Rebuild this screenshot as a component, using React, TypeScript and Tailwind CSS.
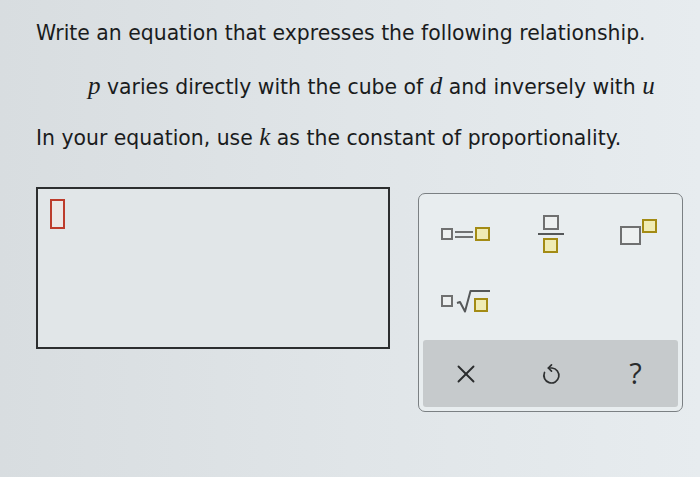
import { X } from 'lucide-react';

const GrayBox = ({ w = 12, h = 12 }: { w?: number; h?: number }) => (
  <span
    className="inline-block border-2 border-[#6f7070] bg-[#edf0f0]"
    style={{ width: w, height: h }}
  />
);

const GoldBox = ({ w = 15, h = 14 }: { w?: number; h?: number }) => (
  <span
    className="inline-block border-2 border-[#a38b14] bg-[#f0ecb4]"
    style={{ width: w, height: h }}
  />
);

function Var({ children }: { children: string }) {
  return (
    <span className="font-['Liberation_Serif',serif] text-[25px] italic leading-none">{children}</span>
  );
}

function UndoIcon() {
  return (
    <svg width="24" height="24" viewBox="0 0 24 24" fill="none" stroke="#2e3031" strokeWidth="1.7" strokeLinecap="round" strokeLinejoin="round">
      <path d="M5.5 10.5 A 7.5 7.5 0 1 0 13 6 L9.5 6" />
      <path d="M12.5 2.8 L9.3 6 L12.5 9.2" />
    </svg>
  );
}

export default function App() {
  return (
    <div className="h-[477px] w-[700px] overflow-hidden bg-gradient-to-r from-[#d8dde0] via-[#e0e5e8] to-[#e7ecef] font-['DejaVu_Sans',sans-serif] text-[#1a1c1d]">
      <div className="pl-[36px] pt-[20px] text-[20.4px] leading-[27px]">
        <p>Write an equation that expresses the following relationship.</p>
        <p className="mt-[26px] pl-[52px]">
          <Var>p</Var> varies directly with the cube of <Var>d</Var> and inversely with <Var>u</Var>
        </p>
        <p className="mt-[23px]">
          In your equation, use <Var>k</Var> as the constant of proportionality.
        </p>
      </div>

      <div className="mt-[35px] flex items-start pl-[36px]">
        <div className="h-[162px] w-[354px] border-2 border-[#2c2e2f] bg-[#e1e6e8] pl-[12px] pt-[10px]">
          <span className="block h-[30px] w-[15px] border-2 border-[#bd3b2b] bg-[#ece6e5]" />
        </div>

        <div className="ml-[28px] mt-[6px] flex h-[219px] w-[265px] flex-col rounded-[7px] border-[1.5px] border-[#7b8083] bg-[#e8edef] p-[4px]">
          <div className="grid grid-cols-3 gap-y-[27px] pt-[16px]">
            <div className="flex h-[40px] items-center justify-center gap-[2px]">
              <GrayBox />
              <span className="flex flex-col gap-[3px]">
                <span className="block h-[2px] w-[18px] bg-[#707272]" />
                <span className="block h-[2px] w-[18px] bg-[#707272]" />
              </span>
              <GoldBox />
            </div>
            <div className="flex h-[40px] flex-col items-center justify-center">
              <GrayBox w={16} h={15} />
              <span className="my-[3px] block h-[2px] w-[26px] bg-[#555859]" />
              <GoldBox w={15} h={15} />
            </div>
            <div className="flex h-[40px] items-center justify-center">
              <span className="ml-[6px] flex items-start">
                <span className="mt-[10px]">
                  <GrayBox w={21} h={19} />
                </span>
                <span className="ml-[1px]">
                  <GoldBox w={15} h={14} />
                </span>
              </span>
            </div>
            <div className="flex h-[40px] items-center justify-center gap-[3px]">
              <GrayBox />
              <span className="flex items-start">
                <svg width="16" height="23" viewBox="0 0 16 23" fill="none" stroke="#555859" strokeWidth="2" strokeLinejoin="round">
                  <path d="M1 13 L4 12 L9 21.5 L14.5 1 L16 1" />
                </svg>
                <span className="h-[23px] border-t-2 border-[#555859] px-[2px] pt-[3px]">
                  <GoldBox w={14} h={14} />
                </span>
              </span>
            </div>
          </div>

          <div className="mt-auto grid h-[67px] grid-cols-3 items-center rounded-[3px] bg-[#c6cacc] text-[#2a2c2d]">
            <div className="flex justify-center">
              <X size={30} strokeWidth={1.5} />
            </div>
            <div className="flex justify-center">
              <UndoIcon />
            </div>
            <div className="flex justify-center pb-[2px] font-['Open_Sans',sans-serif] text-[29px] font-normal leading-none">?</div>
          </div>
        </div>
      </div>
    </div>
  );
}
